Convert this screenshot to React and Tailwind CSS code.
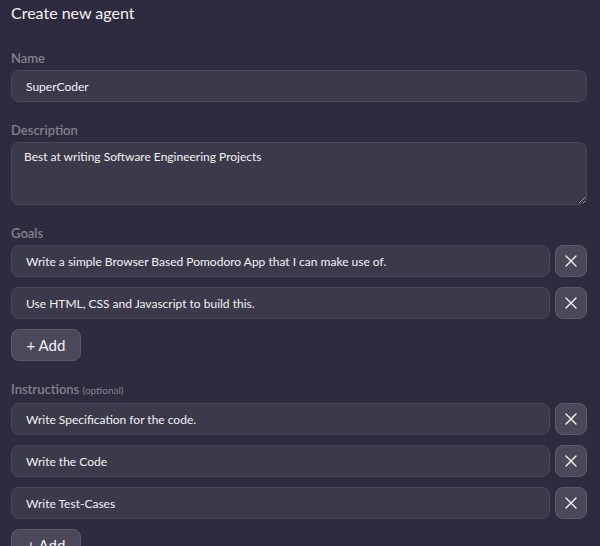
import React from "react";
import { X } from "lucide-react";

const goals = [
  "Write a simple Browser Based Pomodoro App that I can make use of.",
  "Use HTML, CSS and Javascript to build this.",
];

const instructions = [
  "Write Specification for the code.",
  "Write the Code",
  "Write Test-Cases",
];

function ListRow({ value }) {
  return (
    <div className="flex gap-[5px]">
      <input
        readOnly
        value={value}
        className="h-8 flex-1 rounded-lg border border-[#4a4858] bg-[#3c3a4a] px-[14px] text-[12px] text-[#f2f2f4] outline-none"
      />
      <button
        type="button"
        className="flex h-8 w-8 items-center justify-center rounded-lg border border-[#5c5a6b] bg-[#4b4859] text-[#f2f2f4]"
      >
        <X size={20} strokeWidth={1.6} />
      </button>
    </div>
  );
}

function AddButton() {
  return (
    <button
      type="button"
      className="h-8 w-[70px] rounded-lg border border-[#5c5a6b] bg-[#4b4859] text-[15px] text-[#f2f2f4]"
    >
      + Add
    </button>
  );
}

export default function App() {
  return (
    <div
      className="h-[546px] overflow-hidden bg-[#2e2b3e] pl-[11px] pr-[13px]"
      style={{ fontFamily: "'Segoe UI', Lato, 'Noto Sans', sans-serif" }}
    >
      <h1 className="h-[26px] text-[16px] leading-[26px] text-[#f4f4f6]">Create new agent</h1>

      <label className="mt-[24px] mb-1 block text-[13px] font-semibold leading-4 text-[#83818d]">Name</label>
      <input
        readOnly
        value="SuperCoder"
        className="block h-8 w-full rounded-lg border border-[#4a4858] bg-[#3c3a4a] px-[14px] text-[12px] text-[#f2f2f4] outline-none"
      />

      <label className="mt-5 mb-1 block text-[13px] font-semibold leading-4 text-[#83818d]">Description</label>
      <textarea
        readOnly
        defaultValue="Best at writing Software Engineering Projects"
        className="block h-[63px] w-full rounded-lg border border-[#4a4858] bg-[#3c3a4a] px-3 py-[5px] text-[12px] text-[#f2f2f4] outline-none"
      />

      <label className="mt-5 mb-1 block text-[13px] font-semibold leading-4 text-[#83818d]">Goals</label>
      <div className="flex flex-col gap-[10px]">
        {goals.map((g) => (
          <ListRow key={g} value={g} />
        ))}
        <div>
          <AddButton />
        </div>
      </div>

      <label className="mt-5 mb-[5px] block text-[13px] font-semibold leading-4 text-[#83818d]">
        Instructions <span className="text-[10px] font-normal">(optional)</span>
      </label>
      <div className="flex flex-col gap-[10px]">
        {instructions.map((g) => (
          <ListRow key={g} value={g} />
        ))}
        <div>
          <AddButton />
        </div>
      </div>
    </div>
  );
}
